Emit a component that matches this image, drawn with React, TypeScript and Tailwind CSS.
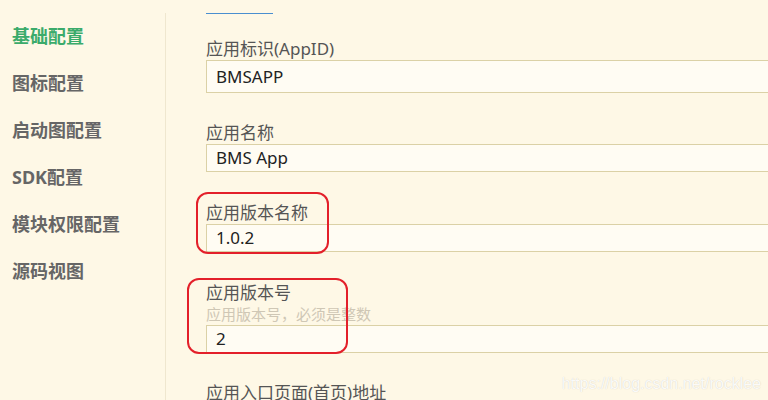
import React from 'react';

const navItems = ['基础配置', '图标配置', '启动图配置', 'SDK配置', '模块权限配置', '源码视图'];

function Field({
  label,
  hint,
  value,
  inputH = 'h-[28px]',
  top,
}: {
  label: string;
  hint?: string;
  value?: string;
  inputH?: string;
  top: string;
}) {
  return (
    <div className={top}>
      <div className="h-[20px] leading-[20px] text-[17px] text-[#555]">{label}</div>
      {hint && <div className="h-[20px] leading-[20px] text-[15px] text-[#cfc7b5] mt-[1px]">{hint}</div>}
      {value !== undefined && (
        <div
          className={`${inputH} mt-[1px] flex items-center pl-[9px] bg-[#fffcf3] border border-r-0 border-[#dbd1a6] text-[17px] text-[#222]`}
        >
          {value}
        </div>
      )}
    </div>
  );
}

export default function App() {
  return (
    <div
      className="relative w-[768px] h-[400px] overflow-hidden bg-[#fef8e6] flex"
      style={{ fontFamily: '"Noto Sans", "Noto Sans CJK SC", sans-serif' }}
    >
      {/* sidebar */}
      <div className="w-[166px] shrink-0 mt-[13px] border-r border-[#efe7cf]">
        {navItems.map((n, i) => (
          <div
            key={n}
            className={`h-[47px] flex items-center pl-[12px] text-[18px] font-bold ${
              i === 0 ? 'text-[#3bab6b]' : 'text-[#666]'
            }`}
          >
            {n}
          </div>
        ))}
      </div>

      {/* form */}
      <div className="flex-1 pl-[40px]">
        <div className="mt-[13px] h-px w-[67px] bg-[#4a8fd0]" />
        <Field top="mt-[25px]" label="应用标识(AppID)" value="BMSAPP" inputH="h-[33px]" />
        <Field top="mt-[30px]" label="应用名称" value="BMS App" />
        <Field top="mt-[31px]" label="应用版本名称" value="1.0.2" />
        <Field top="mt-[31px]" label="应用版本号" hint="应用版本号，必须是整数" value="2" />
        <Field top="mt-[30px]" label="应用入口页面(首页)地址" />
      </div>

      {/* annotations */}
      <div className="absolute left-[196px] top-[192px] w-[133px] h-[62px] border-2 border-[#e3202a] rounded-[12px]" />
      <div className="absolute left-[187px] top-[278px] w-[161px] h-[76px] border-2 border-[#e3202a] rounded-[12px]" />

      {/* watermark */}
      <div
        className="absolute left-[562px] top-[372px] text-[16px] text-white/90"
        style={{ fontFamily: '"Liberation Sans", sans-serif', textShadow: '0 0 1px rgba(0,0,0,0.2)' }}
      >
        https://blog.csdn.net/rocklee
      </div>
    </div>
  );
}
